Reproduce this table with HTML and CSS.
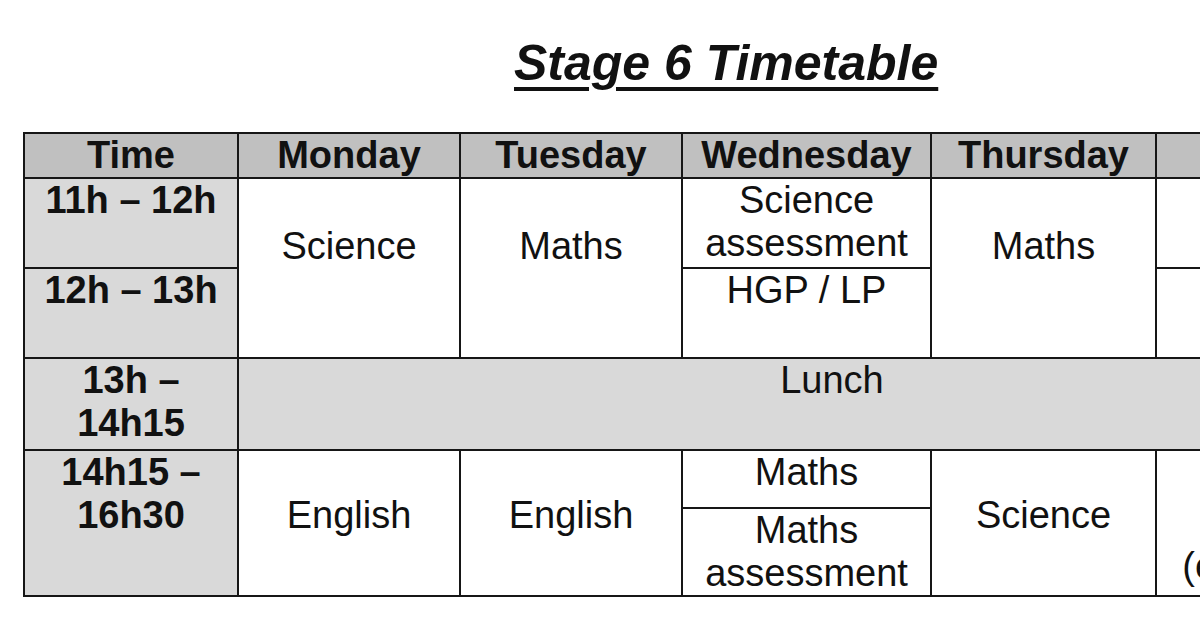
FILE: index.html
```html
<!DOCTYPE html>
<html lang="en">
<head>
<meta charset="utf-8">
<title>Stage 6 Timetable</title>
<link rel="stylesheet" href="styles.css">
</head>
<body>
<div class="page">
  <h1 class="title">Stage 6 Timetable</h1>
  <table class="tt">
    <colgroup>
      <col class="c-time">
      <col class="c-mon">
      <col class="c-tue">
      <col class="c-wed">
      <col class="c-thu">
      <col class="c-fri">
    </colgroup>
    <tr class="r-head">
      <th>Time</th>
      <th>Monday</th>
      <th>Tuesday</th>
      <th>Wednesday</th>
      <th>Thursday</th>
      <th>Friday</th>
    </tr>
    <tr class="r-a">
      <td class="time">11h – 12h</td>
      <td class="lift" rowspan="2">Science</td>
      <td class="lift" rowspan="2">Maths</td>
      <td class="top">Science assessment</td>
      <td class="lift" rowspan="2">Maths</td>
      <td class="top"></td>
    </tr>
    <tr class="r-b">
      <td class="time">12h – 13h</td>
      <td class="top">HGP / LP</td>
      <td class="top"></td>
    </tr>
    <tr class="r-lunch">
      <td class="time">13h – 14h15</td>
      <td class="lunch" colspan="5">Lunch</td>
    </tr>
    <tr class="r-c">
      <td class="time" rowspan="2">14h15 – 16h30</td>
      <td class="mid" rowspan="2">English</td>
      <td class="mid" rowspan="2">English</td>
      <td class="top">Maths</td>
      <td class="mid" rowspan="2">Science</td>
      <td class="center" rowspan="2">Sport<br>PE<br>(extra-mural)</td>
    </tr>
    <tr class="r-d">
      <td class="top">Maths assessment</td>
    </tr>
  </table>
</div>
</body>
</html>
```

FILE: styles.css
```css
html, body {
  margin: 0;
  padding: 0;
  background: #ffffff;
  overflow: hidden;
}

body {
  width: 1200px;
  height: 630px;
  font-family: "Liberation Sans", Arial, sans-serif;
  color: #111111;
}

.page {
  padding: 35px 0 0 23px;
}

.title {
  margin: 0 0 41px 491px;
  font-size: 50px;
  line-height: 56px;
  font-weight: bold;
  font-style: italic;
  text-decoration: underline;
  text-decoration-thickness: 4px;
  text-underline-offset: 7px;
  white-space: nowrap;
}

.tt {
  border-collapse: collapse;
  table-layout: fixed;
  width: 1402px;
  font-size: 38px;
  line-height: 43px;
}

.c-time { width: 214px; }
.c-mon { width: 222px; }
.c-tue { width: 222px; }
.c-wed { width: 249px; }
.c-thu { width: 225px; }
.c-fri { width: 270px; }

.tt th,
.tt td {
  border: 2px solid #161616;
  padding: 0 2px;
  text-align: center;
  vertical-align: top;
}

.tt th {
  background: #c0c0c0;
  font-weight: bold;
  vertical-align: middle;
}

.r-head { height: 45px; }
.r-a { height: 90px; }
.r-b { height: 90px; }
.r-lunch { height: 92px; }
.r-c { height: 58px; }
.r-d { height: 87px; }

.tt .time {
  background: #d9d9d9;
  font-weight: bold;
}

.tt .lunch {
  background: #d9d9d9;
}

.tt .lift {
  vertical-align: middle;
  padding-bottom: 44px;
}

.tt .mid {
  vertical-align: middle;
  padding-bottom: 16px;
}

.tt .center {
  vertical-align: middle;
}
```
